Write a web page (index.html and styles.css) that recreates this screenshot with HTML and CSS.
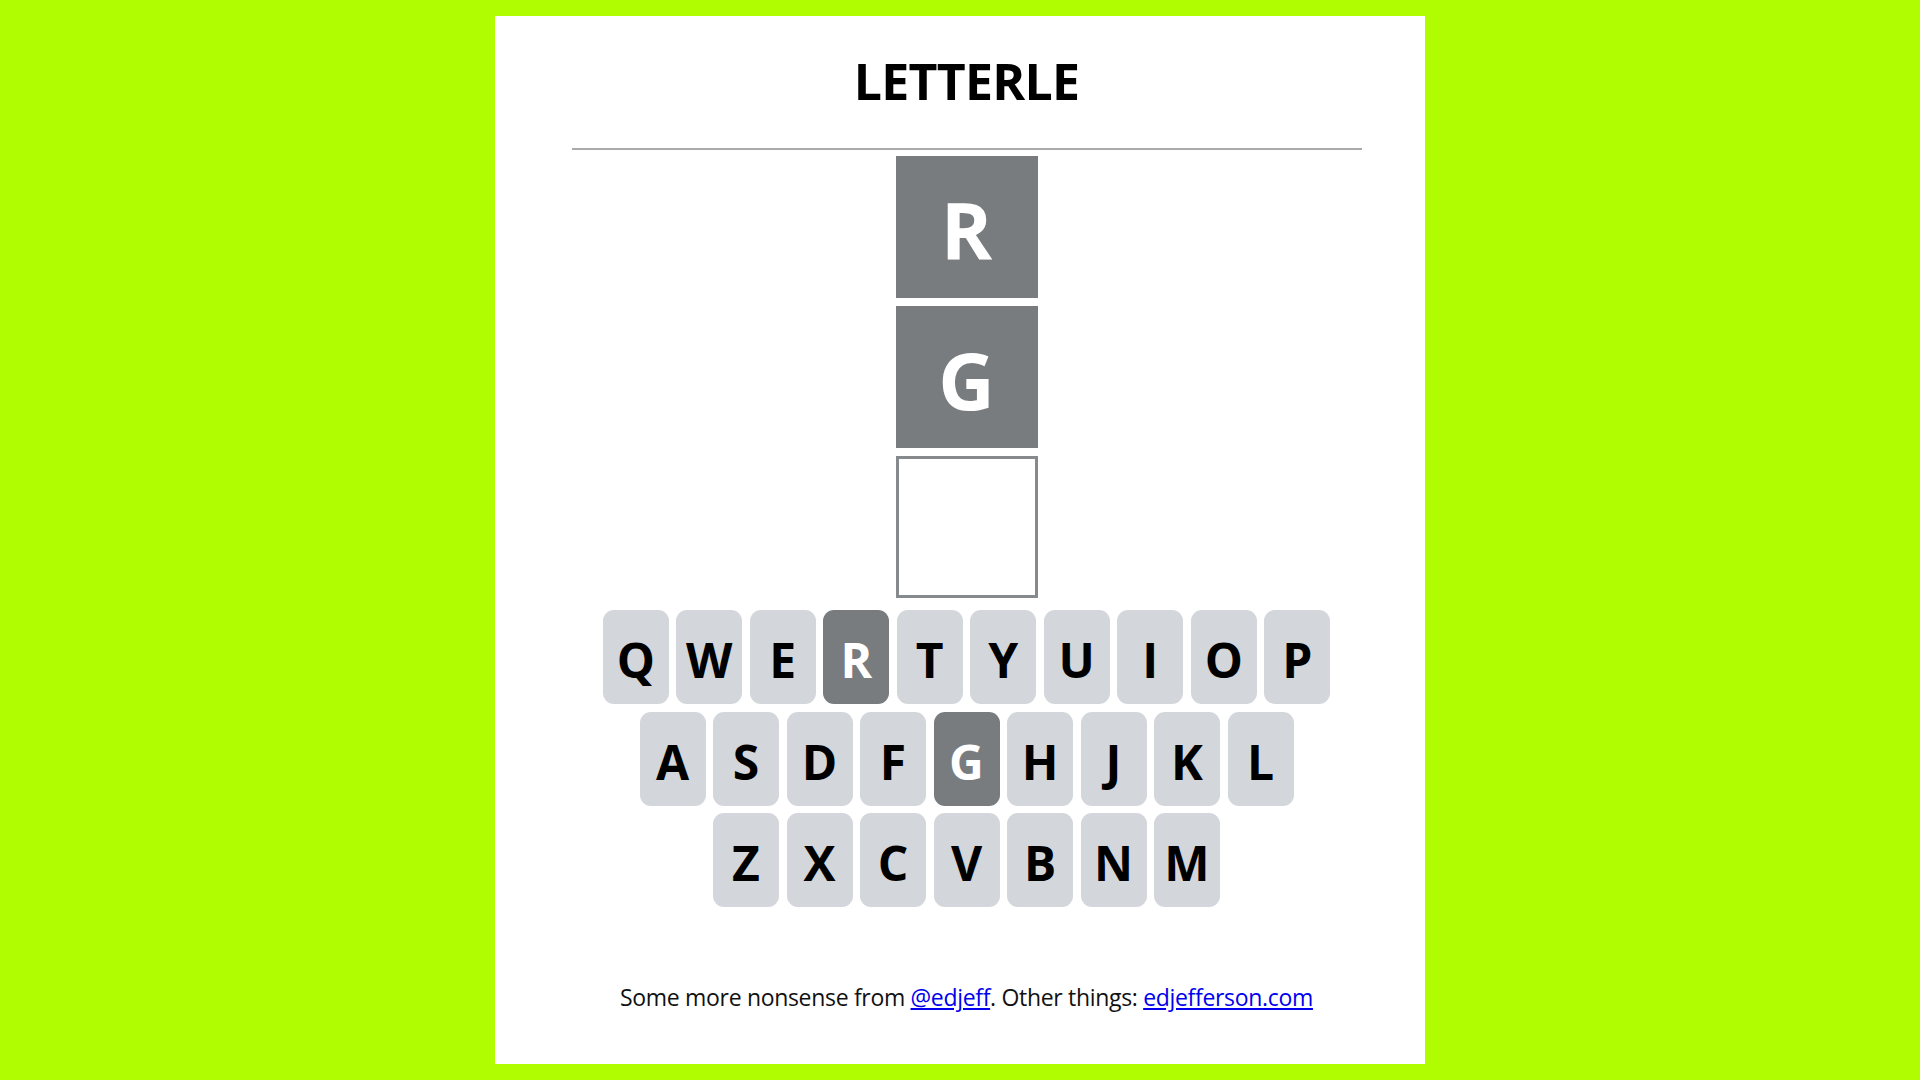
FILE: index.html
```html
<!DOCTYPE html>
<html lang="en">
<head>
<meta charset="utf-8">
<title>LETTERLE</title>
<link rel="stylesheet" href="styles.css">
</head>
<body>
<main class="panel">
  <header class="header">
    <h1 class="title">LETTERLE</h1>
  </header>
  <section class="board">
    <div class="tile tile-absent">R</div>
    <div class="tile tile-absent">G</div>
    <div class="tile tile-empty"></div>
  </section>
  <section class="keyboard">
    <div class="row">
      <div class="key">Q</div><div class="key">W</div><div class="key">E</div><div class="key key-absent">R</div><div class="key">T</div><div class="key">Y</div><div class="key">U</div><div class="key">I</div><div class="key">O</div><div class="key">P</div>
    </div>
    <div class="row">
      <div class="key">A</div><div class="key">S</div><div class="key">D</div><div class="key">F</div><div class="key key-absent">G</div><div class="key">H</div><div class="key">J</div><div class="key">K</div><div class="key">L</div>
    </div>
    <div class="row">
      <div class="key">Z</div><div class="key">X</div><div class="key">C</div><div class="key">V</div><div class="key">B</div><div class="key">N</div><div class="key">M</div>
    </div>
  </section>
  <footer class="footer">Some more nonsense from <a href="#">@edjeff</a>. Other things: <a href="#">edjefferson.com</a></footer>
</main>
</body>
</html>
```

FILE: styles.css
```css
html, body {
  margin: 0;
  padding: 0;
}

body {
  background: #b0fc00;
  display: flex;
  justify-content: center;
  padding: 16px 0;
  font-family: "Open Sans", "Noto Sans", sans-serif;
  color: #000;
}

.panel {
  width: 930px;
  height: 1048px;
  box-sizing: border-box;
  padding-left: 13px;
  background: #fff;
  display: flex;
  flex-direction: column;
  align-items: center;
}

.header {
  width: 790px;
  border-bottom: 2px solid #aaaaaa;
  margin-top: 35px;
  padding-bottom: 37px;
  display: flex;
  justify-content: center;
}

.title {
  margin: 0;
  font-size: 50px;
  line-height: 60px;
  font-weight: 700;
  letter-spacing: -0.75px;
}

.board {
  margin-top: 6px;
  display: flex;
  flex-direction: column;
  gap: 8px;
}

.tile {
  width: 142px;
  height: 142px;
  box-sizing: border-box;
  display: flex;
  align-items: center;
  justify-content: center;
  padding-top: 6px;
  font-size: 78px;
  line-height: 1;
  font-weight: 700;
  color: #fff;
}

.tile-absent {
  background: #787c7e;
}

.tile-empty {
  border: 3px solid #878a8c;
  background: #fff;
}

.keyboard {
  margin-top: 12px;
  display: flex;
  flex-direction: column;
  align-items: center;
  gap: 7.5px;
}

.row {
  display: flex;
  gap: 7.5px;
}

.key {
  width: 66px;
  height: 94px;
  box-sizing: border-box;
  border-radius: 11px;
  background: #d3d6da;
  display: flex;
  align-items: center;
  justify-content: center;
  padding-top: 5px;
  font-size: 48px;
  font-weight: 700;
  color: #000;
}

.key-absent {
  background: #787c7e;
  color: #fff;
}

.footer {
  margin-top: 74px;
  font-size: 23px;
  line-height: 33px;
  letter-spacing: -0.32px;
  color: #111;
}

.footer a {
  color: #0000ee;
  text-decoration: underline;
}
```
